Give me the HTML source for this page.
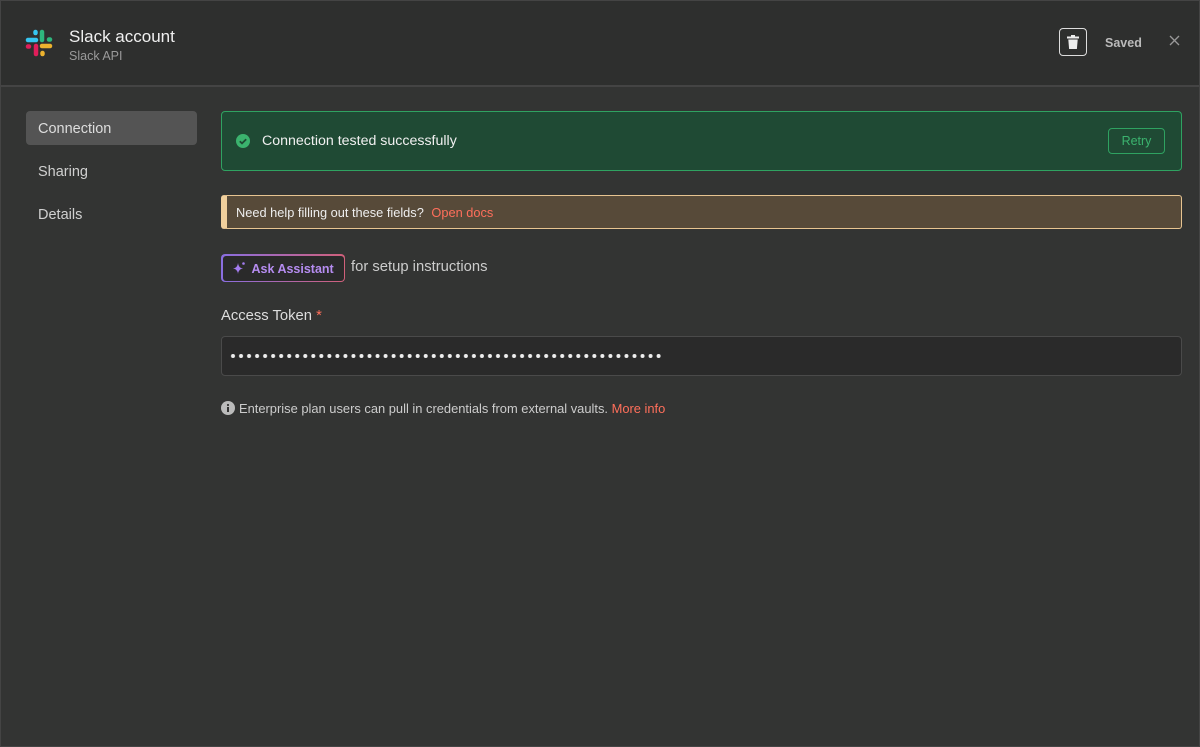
<!DOCTYPE html>
<html><head><style>
body{margin:0;width:1200px;height:747px;background:#333433;font-family:"Liberation Sans",sans-serif;overflow:hidden;position:relative;color:#e6e6e6}
.frame{position:absolute;left:0;top:0;width:1198px;height:745px;border:1px solid #444}
.hdr{position:absolute;left:1px;top:1px;width:1198px;height:84px;background:#2e2f2e;border-bottom:2px solid #444}
.t{position:absolute;left:68px;top:26px;font-size:17px;color:#f0f0f0}
.st{position:absolute;left:68px;top:48px;font-size:12.5px;color:#9a9a9a}
.nav{position:absolute;left:26px;width:171px;height:34px;line-height:36px;padding-left:12px;box-sizing:border-box;font-size:14.5px;color:#d0d0d0;border-radius:4px}
.ok{position:absolute;left:221px;top:111px;width:961px;height:60px;box-sizing:border-box;background:#1f4a34;border:1px solid #2fa261;border-radius:4px}
.warn{position:absolute;left:221px;top:195px;width:961px;height:34px;box-sizing:border-box;background:#574a39;border:1px solid #e7c491;border-left:6px solid #f0cf9c;border-radius:3px;font-size:12.8px;line-height:33px;padding-left:9px;color:#eee}
.or{color:#ff6f5b}
</style></head><body>
<div class="frame"></div>
<div class="hdr">
<svg style="position:absolute;left:24px;top:28px" width="28" height="28" viewBox="0 0 28 28">
<g stroke-linecap="round" stroke-width="4.5">
<line x1="3" y1="11" x2="11" y2="11" stroke="#36c5f0"/><line x1="10.5" y1="3" x2="10.5" y2="4" stroke="#36c5f0"/>
<line x1="17" y1="3" x2="17" y2="11" stroke="#2eb67d"/><line x1="25" y1="10.5" x2="24" y2="10.5" stroke="#2eb67d"/>
<line x1="17" y1="17" x2="25" y2="17" stroke="#ecb22e"/><line x1="17.5" y1="25" x2="17.5" y2="24" stroke="#ecb22e"/>
<line x1="11" y1="17" x2="11" y2="25" stroke="#e01e5a"/><line x1="3" y1="17.5" x2="4" y2="17.5" stroke="#e01e5a"/>
</g></svg>
<div class="t">Slack account</div><div class="st">Slack API</div>
<div style="position:absolute;left:1058px;top:27px;width:28px;height:28px;border:1.5px solid #ddd;border-radius:4px;box-sizing:border-box"></div>
<svg style="position:absolute;left:1065px;top:34px" width="14" height="15" viewBox="0 0 14 15"><rect x="1" y="1.5" width="12" height="2" fill="#eee"/><rect x="5" y="0" width="4" height="2" fill="#eee"/><path d="M2.3 4.5h9.4l-.8 9.5H3.1z" fill="#eee"/></svg>
<div style="position:absolute;left:1104px;top:35px;font-size:12.5px;font-weight:bold;color:#bbb">Saved</div>
<svg style="position:absolute;left:1168px;top:34px" width="11" height="11"><path d="M1 1L10 10M10 1L1 10" stroke="#999" stroke-width="1.3"/></svg>
</div>
<div class="nav" style="top:111px;background:#545454;color:#ddd">Connection</div>
<div class="nav" style="top:154px">Sharing</div>
<div class="nav" style="top:197px">Details</div>
<div class="ok">
<svg style="position:absolute;left:14px;top:22px" width="14" height="14"><circle cx="7" cy="7" r="7" fill="#3bb36e"/><path d="M3.8 7.2l2.2 2.2 4.2-4.2" stroke="#1f4a34" stroke-width="1.8" fill="none"/></svg>
<div style="position:absolute;left:40px;top:21px;font-size:14.2px;color:#f0f0f0">Connection tested successfully</div>
<div style="position:absolute;left:886px;top:16px;width:57px;height:26px;border:1px solid #2fa261;border-radius:4px;box-sizing:border-box;text-align:center;line-height:25px;font-size:12.5px;color:#3bb36e">Retry</div>
</div>
<div class="warn">Need help filling out these fields? <span class="or" style="margin-left:4px">Open docs</span></div>
<div style="position:absolute;left:221px;top:254px;width:124px;height:28px;box-sizing:border-box;padding:1.5px;border-radius:4px;background:linear-gradient(90deg,#8a6ee0,#d0607a)"><div style="width:100%;height:100%;background:#2a2a2a;border-radius:3px;font-size:12.5px;font-weight:bold;line-height:26px;padding-left:29px;box-sizing:border-box;color:#b58cf0">Ask Assistant</div></div>
<svg style="position:absolute;left:232px;top:261px" width="14" height="14" viewBox="0 0 14 14"><path d="M6 2Q6.5 7 11 7.5Q6.5 8 6 13Q5.5 8 1 7.5Q5.5 7 6 2Z" fill="#a47cf0"/><circle cx="11.5" cy="2.5" r="1.3" fill="#a47cf0"/></svg>
<div style="position:absolute;left:351px;top:259px;font-size:14.8px;color:#ccc">for setup instructions</div>
<div style="position:absolute;left:221px;top:308px;font-size:14.8px;color:#ddd">Access Token <span class="or">*</span></div>
<div style="position:absolute;left:221px;top:336px;width:961px;height:40px;box-sizing:border-box;background:#2a2a2a;border:1px solid #4a4a4a;border-radius:4px"></div>
<svg style="position:absolute;left:228px;top:352px" width="440" height="8"><g fill="#eee" id="d"></g>
<pattern id="p" x="0" y="0" width="8.03" height="8" patternUnits="userSpaceOnUse"><circle cx="5" cy="4" r="2" fill="#eee"/></pattern>
<rect x="0" y="0" width="433" height="8" fill="url(#p)"/></svg>
<svg style="position:absolute;left:221px;top:401px" width="14" height="14"><circle cx="7" cy="7" r="7" fill="#bbb"/><rect x="6" y="6" width="2" height="5" fill="#333"/><circle cx="7" cy="4" r="1.1" fill="#333"/></svg>
<div style="position:absolute;left:239px;top:401px;font-size:12.9px;color:#ccc">Enterprise plan users can pull in credentials from external vaults. <span class="or">More info</span></div>
</body></html>
